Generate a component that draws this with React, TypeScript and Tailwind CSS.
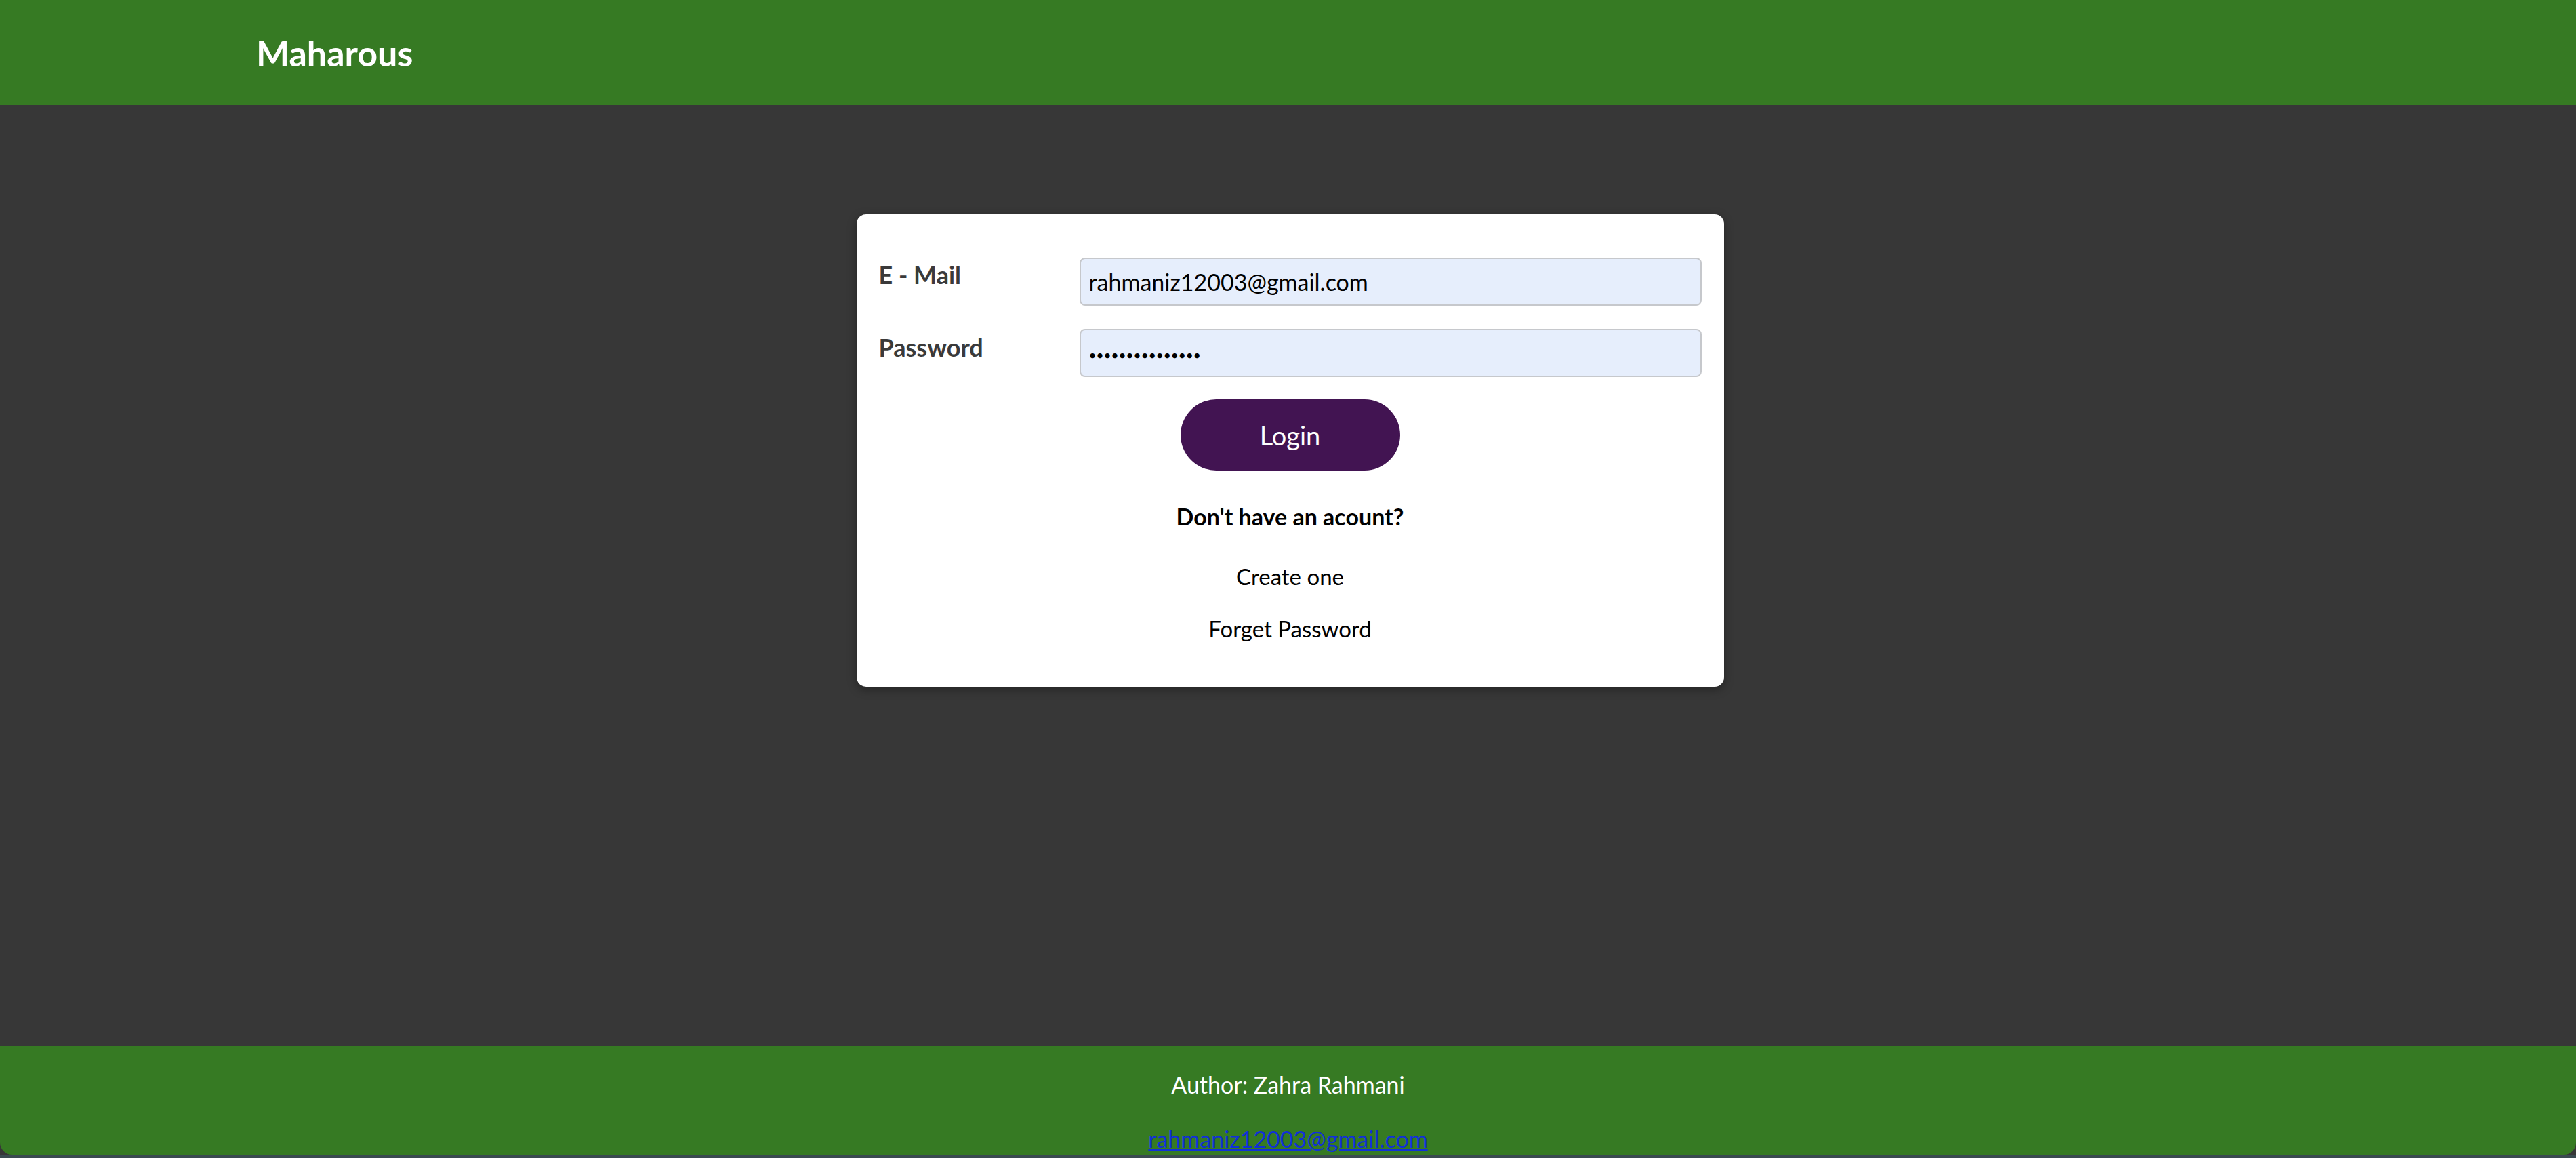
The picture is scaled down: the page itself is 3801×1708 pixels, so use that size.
import React from "react";

export default function App() {
  return (
    <div
      className="flex h-[1708px] w-full flex-col bg-[#373737]"
      style={{ fontFamily: "Lato, 'Noto Sans', sans-serif" }}
    >
      <header className="flex h-[155px] shrink-0 items-center bg-[#367a23] pl-[378px]">
        <h1 className="text-[52px] font-bold leading-none text-white">Maharous</h1>
      </header>

      <main className="flex flex-1 justify-center pl-[6px] pt-[161px]">
        <div className="h-[697px] w-[1280px] rounded-[14px] bg-white px-[33px] pt-[64px] shadow-[0_4px_14px_rgba(0,0,0,0.35)]">
          <div className="flex items-start">
            <label className="mt-[7px] w-[296px] shrink-0 text-[36px] font-bold leading-none text-[#3a3a3a]">
              E - Mail
            </label>
            <input
              type="text"
              readOnly
              value="rahmaniz12003@gmail.com"
              className="h-[71px] flex-1 rounded-[8px] border-2 border-[#c6c8cc] bg-[#e6eefc] px-[12px] text-[34px] text-black outline-none"
            />
          </div>
          <div className="mt-[34px] flex items-start">
            <label className="mt-[9px] w-[296px] shrink-0 text-[36px] font-bold leading-none text-[#3a3a3a]">
              Password
            </label>
            <input
              type="password"
              readOnly
              value="abcdefghijklmno"
              className="h-[71px] flex-1 rounded-[8px] border-2 border-[#c6c8cc] bg-[#e6eefc] px-[12px] pt-[6px] text-[19px] text-black outline-none"
            />
          </div>
          <div className="mt-[33px] flex justify-center">
            <button className="h-[105px] w-[324px] rounded-full bg-[#421452] text-[38px] leading-none text-white">
              Login
            </button>
          </div>
          <p className="mt-[51px] text-center text-[34px] font-bold leading-none text-black">
            Don't have an acount?
          </p>
          <p className="mt-[55px] text-center text-[33px] leading-none text-black">Create one</p>
          <p className="mt-[44px] text-center text-[33px] leading-none text-black">Forget Password</p>
        </div>
      </main>

      <footer className="flex h-[160px] shrink-0 flex-col items-center rounded-b-[18px] bg-[#367a23] pt-[40px]">
        <p className="text-[34px] leading-none text-white">Author: Zahra Rahmani</p>
        <a
          href="#"
          className="mt-[46px] text-[34px] leading-none text-[#1030d8] underline"
        >
          rahmaniz12003@gmail.com
        </a>
      </footer>
      <div className="h-[5px] shrink-0 bg-[#3a4a50]" />
    </div>
  );
}
